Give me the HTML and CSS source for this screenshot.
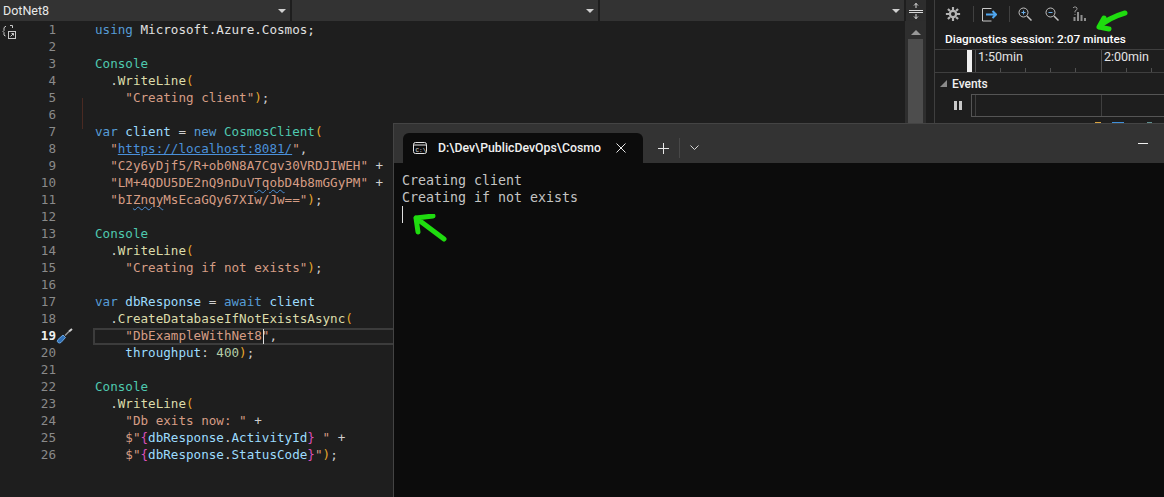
FILE: index.html
```html
<!DOCTYPE html>
<html lang="en">

<head>
    <meta charset="UTF-8">
    <title>DotNet8 - Diagnostics</title>
    <link rel="stylesheet" href="styles.css">
</head>

<body>
    <div class="ide">
        <div class="editor-side">
            <div class="navbar">
                <div class="combo combo-first"><span>DotNet8</span><i class="caret"></i></div>
                <div class="combo combo-mid"><i class="caret"></i></div>
                <div class="combo combo-last"><i class="caret"></i></div>
                <div class="split-btn">
                    <svg width="14" height="16" viewBox="0 0 14 16" fill="none" stroke="#d8d8d8" stroke-width="1">
                        <path d="M0 7.500h14M0 9.500h14M7 0v5M5 2.500l2-2 2 2M7 16v-5M5 13.500l2 2 2-2" />
                    </svg>
                </div>
            </div>
            <div class="editor">
                <div class="glyphs">
                    <svg width="16" height="16" viewBox="0 0 16 16" fill="none" stroke="#c8c8c8" stroke-width="1">
                        <path d="M5 1.500H4L3 3v2.500L2 6.500l1 1V10l1 1h.5M9 .5h2.500V3" />
                        <rect x="7.500" y="6.500" width="7" height="7" />
                        <path d="M9.500 11.500l3-3M10.500 8.500h2v2" />
                    </svg>
                </div>
                <div class="numbers">
                    <div>1</div><div>2</div><div>3</div><div>4</div><div>5</div><div>6</div><div>7</div>
                    <div>8</div><div>9</div><div>10</div><div>11</div><div>12</div><div>13</div><div>14</div>
                    <div>15</div><div>16</div><div>17</div><div>18</div><div class="current">19</div><div>20</div>
                    <div>21</div><div>22</div><div>23</div><div>24</div><div>25</div><div>26</div>
                </div>
                <div class="margin">
                    <svg class="screwdriver" width="18" height="18" viewBox="0 0 18 18" fill="none">
                        <path d="M2 12.500l5-4.500 2.500 2.500-4.500 5q-1.500 1-3 0t0-3z" fill="#2f6fb5" stroke="#6fa8e0" />
                        <path d="M9 8.500l4-4" stroke="#9a9a9a" stroke-width="1.500" />
                        <path d="M13 4.500l3-2.500" stroke="#d0d0d0" stroke-width="2" />
                    </svg>
                </div>
                <pre class="code"><span class="kw">using</span> <span class="id">Microsoft.Azure.Cosmos;</span>

<span class="ty">Console</span>
  <span class="pl">.</span><span class="fn">WriteLine</span><span class="br">(</span>
    <span class="st">"Creating client"</span><span class="br">)</span><span class="pl">;</span>

<span class="kw">var</span> <span class="va">client</span> <span class="pl">=</span> <span class="kw">new</span> <span class="ty">CosmosClient</span><span class="br">(</span>
  <span class="st">"</span><span class="ln">https://localhost:8081/</span><span class="st">"</span><span class="pl">,</span>
  <span class="st">"C2y6yDjf5/R+ob0N8A7Cgv30VRDJIWEH"</span> <span class="pl">+</span>
  <span class="st">"LM+4QDU5DE2nQ9nDuV<span class="squig">Tqob</span>D4b8mGGyPM"</span> <span class="pl">+</span>
  <span class="st">"bI<span class="squig">Znqy</span>MsEcaGQy67XIw/Jw=="</span><span class="br">)</span><span class="pl">;</span>

<span class="ty">Console</span>
  <span class="pl">.</span><span class="fn">WriteLine</span><span class="br">(</span>
    <span class="st">"Creating if not exists"</span><span class="br">)</span><span class="pl">;</span>

<span class="kw">var</span> <span class="va">dbResponse</span> <span class="pl">=</span> <span class="kw">await</span> <span class="va">client</span>
  <span class="pl">.</span><span class="fn">CreateDatabaseIfNotExistsAsync</span><span class="br">(</span>
    <span class="st">"DbExampleWithNet8"</span><span class="pl">,</span>
    <span class="va">throughput</span><span class="pl">:</span> <span class="nu">400</span><span class="br">)</span><span class="pl">;</span>

<span class="ty">Console</span>
  <span class="pl">.</span><span class="fn">WriteLine</span><span class="br">(</span>
    <span class="st">"Db exits now: "</span> <span class="pl">+</span>
    <span class="st">$"</span><span class="mg">{</span><span class="va">dbResponse</span><span class="pl">.</span><span class="va">ActivityId</span><span class="mg">}</span> <span class="st">"</span> <span class="pl">+</span>
    <span class="st">$"</span><span class="mg">{</span><span class="va">dbResponse</span><span class="pl">.</span><span class="va">StatusCode</span><span class="mg">}</span><span class="st">"</span><span class="br">)</span><span class="pl">;</span><i class="line-box"></i><i class="line-caret"></i></pre>
                <div class="scrollbar">
                    <i class="scroll-up"></i>
                    <div class="scroll-thumb"></div>
                </div>
            </div>
        </div>

        <aside class="diag">
            <div class="diag-tools">
                <svg class="gear" width="16" height="16" viewBox="0 0 18 18" fill="none" stroke="#b4b4b4">
                    <circle cx="9" cy="9" r="3.500" stroke-width="2.500" />
                    <path d="M9 1v3.500M9 13.500V17M1 9h3.500M13.500 9H17M3.300 3.300l2.400 2.400M12.300 12.300l2.400 2.400M3.300 14.700l2.400-2.400M12.300 5.700l2.400-2.400" stroke-width="2.400" />
                </svg>
                <i class="tool-sep"></i>
                <svg class="door" width="15" height="16" viewBox="0 0 15 16" fill="none">
                    <path d="M9.500 2.500H.500v12.500h9" stroke="#c8c8c8" />
                    <path d="M4 8.500h10M10.500 5l3.500 3.500-3.500 3.500" stroke="#4fa6ef" stroke-width="2" />
                </svg>
                <i class="tool-sep"></i>
                <svg class="zoom-in" width="14" height="14" viewBox="0 0 14 14" fill="none" stroke="#c0c0c0">
                    <circle cx="5.500" cy="5.500" r="4.500" />
                    <path d="M9 9l4.500 4.500" stroke-width="1.500" />
                    <path d="M3.500 5.500h4M5.500 3.500v4" stroke="#6cb0ea" />
                </svg>
                <svg class="zoom-out" width="14" height="14" viewBox="0 0 14 14" fill="none" stroke="#c0c0c0">
                    <circle cx="5.500" cy="5.500" r="4.500" />
                    <path d="M9 9l4.500 4.500" stroke-width="1.500" />
                    <path d="M3.500 5.500h4" stroke="#6cb0ea" />
                </svg>
                <svg class="chart" width="14" height="15" viewBox="0 0 14 15" fill="none" stroke="#8f8f8f">
                    <path d="M1 2l1-1h2l1 1v1.500l-2 1.500v1.500M3 8v1" />
                    <path d="M2.500 15v-4M6 15V6M9.500 15V9M13 15v-3" stroke-width="2" />
                </svg>
            </div>
            <div class="session">Diagnostics session: 2:07 minutes</div>
            <div class="timeline">
                <i class="playhead"></i>
                <div class="tick-major"><span>1:50min</span><i class="minors"><b></b><b></b><b></b><b></b></i></div>
                <div class="tick-major"><span>2:00min</span><i class="minors"><b></b><b></b></i></div>
            </div>
            <div class="events-head"><i class="tri"></i><span>Events</span></div>
            <div class="events-row">
                <div class="pause"><i></i><i></i></div>
                <div class="events-track">
                    <i class="track-tick"></i>
                    <i class="track-tick"></i>
                </div>
            </div>
            <div class="event-marks">
                <i class="mark-orange"></i>
                <i class="mark-blue"></i>
                <i class="mark-teal"></i>
            </div>
        </aside>
    </div>

    <!-- terminal window sits on top of the ide -->
    <div class="terminal">
        <div class="term-tabs">
            <div class="term-tab">
                <svg width="14" height="14" viewBox="0 0 14 14" fill="none" stroke="#e4e4e4">
                    <rect x=".5" y="1.500" width="13" height="11" rx="2" />
                    <path d="M.5 4h13" />
                    <text x="2.500" y="10.500" class="tab-icon-text">C:\</text>
                </svg>
                <span class="tab-title">D:\Dev\PublicDevOps\Cosmo</span>
                <svg width="10" height="10" viewBox="0 0 10 10" stroke="#e8e8e8" stroke-width="1">
                    <path d="M.5 .5l9 9M9.500 .5l-9 9" />
                </svg>
            </div>
            <svg class="term-plus" width="11" height="11" viewBox="0 0 11 11" stroke="#e8e8e8">
                <path d="M5.500 0v11M0 5.500h11" />
            </svg>
            <i class="tool-sep term-sep"></i>
            <svg width="9" height="6" viewBox="0 0 9 6" fill="none" stroke="#d8d8d8">
                <path d="M.5 .5l4 4 4-4" />
            </svg>
            <i class="term-min"></i>
        </div>
        <div class="term-body">
            <div>Creating client</div>
            <div>Creating if not exists</div>
            <i class="term-cursor"></i>
        </div>
    </div>

    <svg class="arrow arrow-top" width="36" height="26" viewBox="0 0 36 26" fill="none" stroke="#1fdc0f" stroke-width="5" stroke-linecap="round" stroke-linejoin="round">
        <path d="M5 19Q14 10 31 5M5 19l5-9M5 19l10 2" />
    </svg>
    <svg class="arrow arrow-term" width="36" height="32" viewBox="0 0 36 32" fill="none" stroke="#1fdc0f" stroke-width="5" stroke-linecap="round" stroke-linejoin="round">
        <path d="M4 4l28 21M4 4l2 14M4 4l17-2" />
    </svg>
</body>

</html>
```

FILE: styles.css
```css
* {
    box-sizing: border-box;
}

body {
    margin: 0;
    height: 497px;
    overflow: hidden;
    position: relative;
    background-color: #1e1e1e;
    font-family: Roboto, "Liberation Sans", sans-serif;
    color: #f0f0f0;
}

.ide {
    display: flex;
    height: 100%;
}

.editor-side {
    width: 935px;
    padding-right: 8px;
    border-right: 1px solid #3f3f3f;
    display: flex;
    flex-direction: column;
}

/* top combos */
.navbar {
    display: flex;
    height: 21px;
    gap: 2px;
    background-color: #1e1e1e;
}

.combo {
    display: flex;
    justify-content: space-between;
    align-items: center;
    background-color: #333333;
    padding: 0 4px 0 3px;
    font-size: 12.500px;
    color: #e8e8e8;
}

.combo-first {
    width: 290px;
}

.combo-mid {
    width: 306px;
    justify-content: flex-end;
}

.combo-last {
    width: 304px;
    justify-content: flex-end;
}

.caret {
    border-left: 4px solid transparent;
    border-right: 4px solid transparent;
    border-top: 4px solid #d0d0d0;
}

.split-btn {
    flex: 1;
    display: flex;
    justify-content: center;
    align-items: center;
    background-color: #2d2d2d;
}

/* editor */
.editor {
    flex: 1;
    display: flex;
    min-height: 0;
}

.glyphs {
    width: 22px;
    padding: 4px 0 0 1px;
}

.numbers {
    width: 34px;
    text-align: right;
    font-family: "DejaVu Sans Mono", monospace;
    font-size: 12.600px;
    line-height: 17px;
    color: #8a8a8a;
}

.current {
    color: #f0f0f0;
    font-weight: bold;
}

.margin {
    width: 39px;
    position: relative;
}

.margin::before {
    content: "";
    position: absolute;
    left: 26px;
    top: 77px;
    width: 1px;
    height: 31px;
    background-color: #4a2a22;
}

.screwdriver {
    position: absolute;
    left: 0;
    top: 306px;
}

.code {
    flex: 1;
    margin: 0;
    position: relative;
    font-family: "DejaVu Sans Mono", monospace;
    font-size: 12.600px;
    line-height: 17px;
    color: #dcdcdc;
}

.kw {
    color: #569cd6;
}

.id {
    color: #e0e0e0;
}

.ty {
    color: #4ec9b0;
}

.fn {
    color: #dcdcaa;
}

.br {
    color: #e6a82c;
}

.pl {
    color: #cfcfcf;
}

.st {
    color: #d69d85;
}

.va {
    color: #9cdcfe;
}

.nu {
    color: #b5cea8;
}

.mg {
    color: #da4fb8;
}

.ln {
    color: #4a90d9;
    text-decoration: underline;
}

.squig {
    text-decoration: underline wavy #4a90d9 1px;
    text-underline-offset: 2px;
}

/* current line outline and text caret */
.line-box {
    position: absolute;
    left: -2px;
    right: 0;
    top: 307px;
    height: 17px;
    border: 2px solid #3c3c3c;
}

.line-caret {
    position: absolute;
    left: 168px;
    top: 308px;
    width: 1px;
    height: 15px;
    background-color: #e0e0e0;
}

.scrollbar {
    width: 21px;
    padding-top: 9px;
    background-color: #2e2e2e;
    display: flex;
    flex-direction: column;
    align-items: center;
}

.scroll-up {
    border-left: 5px solid transparent;
    border-right: 5px solid transparent;
    border-bottom: 5px solid #999999;
}

.scroll-thumb {
    width: 15px;
    height: 120px;
    margin-top: 4px;
    background-color: #4d4d4d;
}

/* diagnostics panel */
.diag {
    flex: 1;
    min-width: 0;
    overflow: hidden;
}

.diag-tools {
    height: 30px;
    display: flex;
    align-items: center;
    padding: 0 0 3px 10px;
}

.tool-sep {
    width: 1px;
    height: 16px;
    margin-left: 12px;
    background-color: #404040;
}

.door {
    margin-left: 8px;
}

.zoom-in {
    margin: 0 0 0 8px;
}

.zoom-out {
    margin: 0 0 0 13px;
}

.chart {
    margin: 0 0 0 13px;
}

.session {
    height: 19px;
    padding-left: 10px;
    font-size: 11.800px;
    font-weight: 500;
    line-height: 18px;
    color: #ffffff;
}

.timeline {
    height: 24px;
    display: flex;
    padding-left: 40px;
    position: relative;
    border-top: 1px solid #3f3f3f;
    border-bottom: 1px solid #3f3f3f;
    font-size: 12.500px;
}

.playhead {
    position: absolute;
    left: 32px;
    top: 0;
    width: 5px;
    height: 22px;
    background-color: #f0f0f0;
}

.tick-major {
    width: 126px;
    height: 22px;
    padding-left: 2px;
    border-left: 1px solid #505050;
    line-height: 14px;
    color: #e4e4e4;
    position: relative;
}

.tick-major:last-child {
    flex: 1;
    width: auto;
    min-width: 0;
}

.minors {
    position: absolute;
    left: 24px;
    bottom: 0;
    display: flex;
    gap: 24px;
}

.minors b {
    width: 1px;
    height: 4px;
    background-color: #505050;
}

.events-head {
    display: flex;
    align-items: center;
    height: 21px;
    padding-left: 5px;
    gap: 5px;
    font-size: 12px;
    font-weight: 500;
    color: #f0f0f0;
}

.tri {
    border-left: 7px solid transparent;
    border-bottom: 7px solid #8a8a8a;
}

.events-row {
    display: flex;
    align-items: center;
    padding-left: 19px;
    gap: 9px;
}

.pause {
    display: flex;
    gap: 2px;
}

.pause i {
    width: 3px;
    height: 9px;
    background-color: #c8c8c8;
}

.events-track {
    flex: 1;
    height: 23px;
    padding-left: 3px;
    display: flex;
    gap: 125px;
    border: 1px solid #555555;
    border-right: 0;
}

.track-tick {
    width: 1px;
    background-color: #3f3f3f;
}

.event-marks {
    display: flex;
    height: 2px;
    margin-top: 5px;
    padding-left: 160px;
}

.mark-orange {
    width: 6px;
    background-color: #d9a441;
}

.mark-blue {
    width: 12px;
    margin-left: 11px;
    background-color: #3f8fd8;
}

.mark-teal {
    width: 5px;
    margin-left: 23px;
    background-color: #5f9090;
}

/* terminal */
.terminal {
    position: absolute;
    left: 393px;
    top: 123px;
    right: 0;
    bottom: 0;
    background-color: #0c0c0c;
    border-left: 1px solid #444444;
    border-top: 1px solid #444444;
    display: flex;
    flex-direction: column;
}

.term-tabs {
    height: 39px;
    display: flex;
    align-items: center;
    padding: 9px 0 0 9px;
    background-color: #333333;
}

.term-tab {
    width: 240px;
    height: 30px;
    display: flex;
    align-items: center;
    padding: 0 17px 0 10px;
    background-color: #0c0c0c;
    border-radius: 6px 6px 0 0;
}

.tab-icon-text {
    font-family: "Liberation Mono", monospace;
    font-size: 6px;
    fill: #e4e4e4;
    stroke: none;
}

.tab-title {
    flex: 1;
    padding-left: 11px;
    font-size: 12.300px;
    font-weight: 500;
    color: #f0f0f0;
}

.term-plus {
    margin-left: 15px;
}

.term-sep {
    height: 20px;
    margin: 0 10px 0 10px;
    background-color: #484848;
}

.term-min {
    width: 10px;
    height: 1px;
    margin-left: auto;
    margin-right: 16px;
    margin-top: -10px;
    background-color: #f0f0f0;
}

.term-body {
    flex: 1;
    padding: 9px 0 0 8px;
    font-family: "DejaVu Sans Mono", monospace;
    font-size: 13.300px;
    line-height: 17px;
    color: #c4c4c4;
}

.term-cursor {
    display: block;
    width: 1px;
    height: 17px;
    background-color: #e0e0e0;
}

/* green hand drawn arrows */
.arrow {
    position: absolute;
}

.arrow-top {
    left: 1094px;
    top: 8px;
}

.arrow-term {
    left: 412px;
    top: 214px;
}
```
